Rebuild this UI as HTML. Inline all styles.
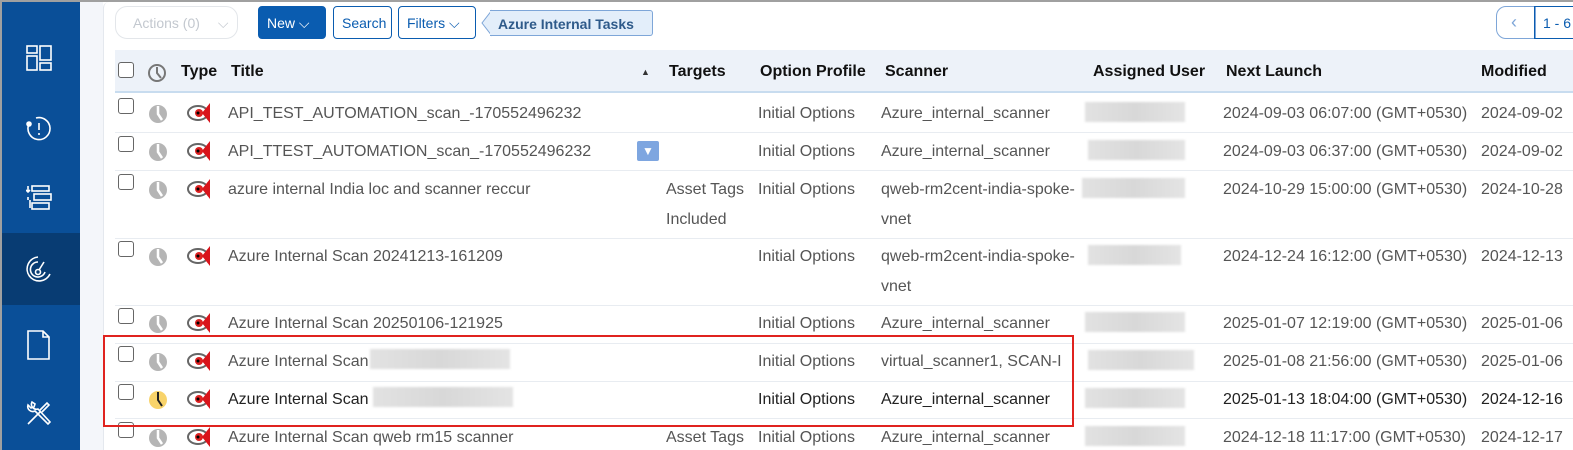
<!DOCTYPE html>
<html><head><meta charset="utf-8"><style>
*{box-sizing:border-box;margin:0;padding:0}
body{width:1573px;height:450px;overflow:hidden;background:#fff;font-family:"Liberation Sans",Arial,sans-serif;position:relative}
.frame{position:absolute;left:0;top:0;width:1573px;height:450px;border:2px solid #a0a0a0;border-right:none;border-bottom:none;pointer-events:none;z-index:10}
.side{position:absolute;left:2px;top:2px;width:78px;height:448px;background:#0a4f98}
.sel{position:absolute;left:2px;top:233px;width:78px;height:72px;background:#083c73}
.gutter{position:absolute;left:80px;top:2px;width:23px;height:448px;background:#f4f6fa}
.panel{position:absolute;left:103px;top:2px;width:1470px;height:448px;background:#fff;border-left:1px solid #e4e8ee;border-radius:6px 0 0 0}
.a{position:absolute;white-space:nowrap}
.t{font-size:16px;color:#555}
.h{font-size:16px;font-weight:bold;color:#111}
.hdr{position:absolute;left:115px;top:50px;width:1458px;height:43px;background:#edf2f9;border-bottom:2px solid #c8dcef}
.sep{position:absolute;left:115px;width:1458px;height:1px;background:#e8ecf1}
.cb{position:absolute;width:16px;height:16px;border:1.5px solid #666;border-radius:3px;background:#fff}
.blur{position:absolute;height:20px;background:linear-gradient(90deg,#e2e2e2,#d8d8d8,#e4e4e4);filter:blur(1px)}
.btn{position:absolute;top:6px;height:33px;border:1px solid #0a5cb0;border-radius:4px;font-size:14px;color:#0a5cb0;padding:8px 8px}
</style></head><body>
<div class="side"></div><div class="sel"></div>
<svg class="a" style="left:26px;top:45px" width="26" height="26" fill="none" stroke="#fff" stroke-width="1.6"><rect x="1" y="1" width="10" height="7"/><rect x="1" y="11" width="10" height="14"/><rect x="14" y="1" width="11" height="14"/><rect x="14" y="18" width="11" height="7"/></svg>
<svg class="a" style="left:26px;top:116px" width="26" height="26" fill="none" stroke="#fff" stroke-width="1.6"><path d="M3 8 A11 11 0 1 0 10 2"/><circle cx="3" cy="8" r="2" fill="#fff"/><path d="M13 7v7M13 17v2"/></svg>
<svg class="a" style="left:26px;top:185px" width="26" height="26" fill="none" stroke="#fff" stroke-width="1.6"><rect x="6" y="1" width="17" height="5"/><rect x="8" y="9" width="17" height="6"/><rect x="6" y="18" width="17" height="6"/><path d="M2 1v6M0 5l2 2 2-2M4 15v8M2 12v3"/></svg>
<svg class="a" style="left:26px;top:256px" width="26" height="26" fill="none" stroke="#fff" stroke-width="1.6"><path d="M24 18A12 12 0 1 1 12 1"/><path d="M19 16A7.5 7.5 0 1 1 12 6"/><circle cx="12" cy="16" r="2.5"/><path d="M13 14l5-8"/></svg>
<svg class="a" style="left:27px;top:330px" width="24" height="30" fill="none" stroke="#fff" stroke-width="1.6"><path d="M1 1h15l6 6v22H1z M16 1v6h6"/></svg>
<svg class="a" style="left:26px;top:400px" width="26" height="26" fill="none" stroke="#fff" stroke-width="1.6"><path d="M2 24L14 12M6 2a5 5 0 0 0 6 7l12 13-2 2L9 11a5 5 0 0 1-7-6l3 3 3-1 1-3z"/><path d="M14 10l7-7 2 2-7 7"/></svg>
<div class="gutter"></div><div class="panel"></div>

<div class="a" style="left:115px;top:6px;width:123px;height:33px;border:1px solid #e3e6ea;border-radius:12px;font-size:14px;color:#c3c8cf;padding:8px 0 0 17px">Actions (0) <span style="margin-left:14px">⌵</span></div>
<div class="btn" style="left:258px;width:68px;background:#0a5cb0;color:#fff">New ⌵</div>
<div class="btn" style="left:333px;width:59px">Search</div>
<div class="btn" style="left:398px;width:78px">Filters ⌵</div>
<svg class="a" style="left:480px;top:9px" width="12" height="28"><path d="M12 1L2 14L12 27" fill="#e3eefa" stroke="#7ea6d8"/></svg>
<div class="a" style="left:490px;top:10px;width:163px;height:26px;background:#e3eefa;border:1px solid #7ea6d8;border-left:none;border-radius:0 3px 3px 0;font-size:14px;font-weight:bold;color:#2e5a8a;padding:5px 0 0 8px">Azure Internal Tasks</div>
<div class="a" style="left:1496px;top:6px;width:40px;height:33px;border:1px solid #7ea6d8;border-radius:10px 0 0 10px;color:#7ea6d8;font-size:18px;padding:5px 0 0 14px">‹</div>
<div class="a" style="left:1534px;top:6px;width:40px;height:33px;border:1px solid #0a5cb0;font-size:14px;color:#0a5cb0;padding:8px 0 0 8px">1 - 6</div>

<div class="hdr"></div>
<div class="cb" style="left:118px;top:62px"></div>
<svg class="a" style="left:147px;top:63px" width="20" height="20"><circle cx="10" cy="10" r="8" fill="none" stroke="#777" stroke-width="2"/><path d="M10 4v6l4 5" stroke="#777" stroke-width="2" fill="none"/></svg>
<div class="a h" style="left:181px;top:63px">Type</div>
<div class="a h" style="left:231px;top:63px">Title</div>
<div class="a" style="left:641px;top:67px;font-size:9px;color:#333">▲</div>
<div class="a h" style="left:669px;top:63px">Targets</div>
<div class="a h" style="left:760px;top:63px">Option Profile</div>
<div class="a h" style="left:885px;top:63px">Scanner</div>
<div class="a h" style="left:1093px;top:63px">Assigned User</div>
<div class="a h" style="left:1226px;top:63px">Next Launch</div>
<div class="a h" style="left:1481px;top:63px">Modified</div>

<div class="sep" style="top:132px"></div><div class="sep" style="top:170px"></div><div class="sep" style="top:238px"></div><div class="sep" style="top:305px"></div><div class="sep" style="top:343px"></div><div class="sep" style="top:381px"></div><div class="sep" style="top:418px"></div>

<div id="rows"></div>
<script>
var R=[[113,"API_TEST_AUTOMATION_scan_-170552496232","","Initial Options","Azure_internal_scanner","","2024-09-03 06:07:00 (GMT+0530)","2024-09-02",0,1085,100],
[151,"API_TTEST_AUTOMATION_scan_-170552496232","","Initial Options","Azure_internal_scanner","","2024-09-03 06:37:00 (GMT+0530)","2024-09-02",0,1088,97],
[189,"azure internal India loc and scanner reccur","Asset Tags","Initial Options","qweb-rm2cent-india-spoke-","","2024-10-29 15:00:00 (GMT+0530)","2024-10-28",0,1082,103],
[256,"Azure Internal Scan 20241213-161209","","Initial Options","qweb-rm2cent-india-spoke-","","2024-12-24 16:12:00 (GMT+0530)","2024-12-13",0,1088,93],
[323,"Azure Internal Scan 20250106-121925","","Initial Options","Azure_internal_scanner","","2025-01-07 12:19:00 (GMT+0530)","2025-01-06",0,1085,100],
[361,"Azure Internal Scan","","Initial Options","virtual_scanner1, SCAN-I","","2025-01-08 21:56:00 (GMT+0530)","2025-01-06",0,1088,106],
[399,"Azure Internal Scan","","Initial Options","Azure_internal_scanner","","2025-01-13 18:04:00 (GMT+0530)","2024-12-16",1,1085,100],
[437,"Azure Internal Scan qweb rm15 scanner","Asset Tags","Initial Options","Azure_internal_scanner","","2024-12-18 11:17:00 (GMT+0530)","2024-12-17",0,1085,100]];
var h="";
R.forEach(function(r,i){var y=r[0],c=r[8]?"#222":"#555",ty=y-8,x=3;
h+='<div class="cb" style="left:118px;top:'+(y-15)+'px"></div>';
h+='<svg class="a" style="left:148px;top:'+(y-9)+'px" width="20" height="20"><circle cx="10" cy="10" r="9" fill="'+(r[8]?"#f8d36a":"#b5b5b5")+'"/><path d="M10 2v8l4 6" stroke="'+(r[8]?"#222":"#fff")+'" stroke-width="'+(r[8]?2:2.5)+'" fill="none"/></svg>';
h+='<svg class="a" style="left:186px;top:'+(y-11)+'px" width="26" height="22"><ellipse cx="12" cy="11" rx="10" ry="7" fill="none" stroke="#666" stroke-width="2"/><circle cx="13" cy="11" r="4" fill="#d22"/><circle cx="12" cy="11" r="1.5" fill="#000"/><path d="M16 11L24 1V21Z" fill="#d9141b"/></svg>';
h+='<div class="a t" style="left:228px;top:'+ty+'px;color:'+c+'">'+r[1]+'</div>';
if(i==5||i==6)h+='<div class="blur" style="left:'+(i==5?370:373)+'px;top:'+(y-12)+'px;width:140px"></div>';
if(r[2])h+='<div class="a t" style="left:666px;top:'+ty+'px">'+r[2]+'</div>';
if(i==2)h+='<div class="a t" style="left:666px;top:'+(ty+30)+'px">Included</div>';
h+='<div class="a t" style="left:758px;top:'+ty+'px;color:'+c+'">'+r[3]+'</div>';
h+='<div class="a t" style="left:881px;top:'+ty+'px;color:'+c+'">'+r[4]+'</div>';
if(i==2||i==3)h+='<div class="a t" style="left:881px;top:'+(ty+30)+'px">vnet</div>';
h+='<div class="blur" style="left:'+r[9]+'px;top:'+(y-11)+'px;width:'+r[10]+'px"></div>';
h+='<div class="a t" style="left:1223px;top:'+ty+'px;color:'+c+'">'+r[6]+'</div>';
h+='<div class="a t" style="left:1481px;top:'+ty+'px;color:'+c+'">'+r[7]+'</div>';});
document.getElementById("rows").innerHTML=h;
</script>
<div class="a" style="left:637px;top:141px;width:22px;height:20px;background:#7ea6e0;border-radius:2px;color:#fff;font-size:12px;text-align:center;line-height:20px">▼</div>
<div class="a" style="left:103px;top:335px;width:971px;height:92px;border:2px solid #e0231f"></div>
<div class="frame"></div>
</body></html>
